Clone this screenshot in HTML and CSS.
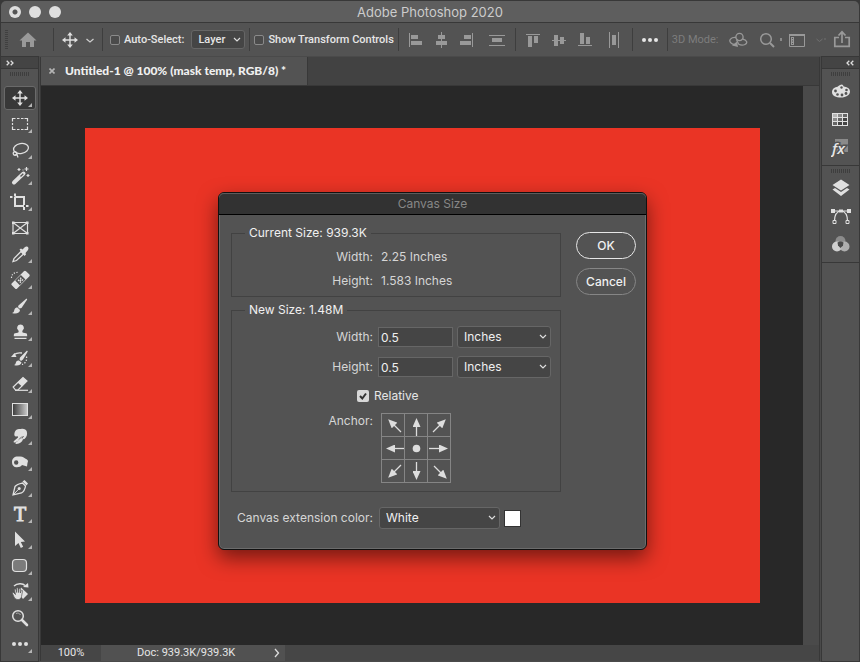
FILE: index.html
```html
<!DOCTYPE html>
<html lang="en">
<head>
    <meta charset="UTF-8">
    <meta name="viewport" content="width=device-width, initial-scale=1.0">
    <title>Adobe Photoshop 2020</title>
    <link rel="stylesheet" href="styles.css">
</head>
<body>

    <!-- Title bar -->
    <header class="title-bar">
        <div class="lights">
            <button class="light edited" aria-label="Close"></button>
            <button class="light" aria-label="Minimize"></button>
            <button class="light" aria-label="Zoom"></button>
        </div>
        <h1>Adobe Photoshop 2020</h1>
    </header>

    <!-- Options bar -->
    <div class="options-bar">
        <span class="bar-grip"></span>
        <button class="icon-button home" aria-label="Home">
            <svg width="20" height="20" viewBox="-10 -10 20 20"><path fill="#999" d="M-1-7.500L7.500.5H5V7H1V2H-3V7H-7V.5H-9.500z"/></svg>
        </button>
        <span class="sep"></span>
        <button class="icon-button current" aria-label="Move tool">
            <svg width="20" height="20" viewBox="-10 -10 20 20"><use href="#move"/></svg>
        </button>
        <button class="icon-button small" aria-label="Tool presets">
            <svg width="10" height="10" viewBox="0 0 10 10"><path d="M1.500 4L5 7 8.500 4" fill="none" stroke="#ccc" stroke-width="1.300"/></svg>
        </button>
        <span class="sep"></span>
        <div class="option-group">
            <input type="checkbox" id="autoSelect">
            <label for="autoSelect">Auto-Select:</label>
            <select class="layer-select" aria-label="Auto-select target">
                <option>Layer</option>
                <option>Group</option>
            </select>
        </div>
        <span class="sep"></span>
        <div class="option-group transform">
            <input type="checkbox" id="showTransform">
            <label for="showTransform">Show Transform Controls</label>
        </div>
        <span class="sep"></span>
        <button class="icon-button" aria-label="Align left edges">
            <svg width="20" height="20" viewBox="-10 -10 20 20" fill="#999"><path d="M-7-7h1V7h-1zM-5-5h7v4h-7zM-5 1H6v4H-5z"/></svg>
        </button>
        <button class="icon-button" aria-label="Align horizontal centers">
            <svg width="20" height="20" viewBox="-10 -10 20 20" fill="#999"><path d="M-1-8h1V8h-1zM-4-5h7v4h-7zM-6 1H5v4H-6z"/></svg>
        </button>
        <button class="icon-button" aria-label="Align right edges">
            <svg width="20" height="20" viewBox="-10 -10 20 20" fill="#999"><path d="M4-7h1V7H4zM-4-5h7v4h-7zM-8 1H3v4H-8z"/></svg>
        </button>
        <button class="icon-button wide" aria-label="Distribute vertically">
            <svg width="20" height="20" viewBox="-10 -10 20 20" fill="#999"><path d="M-7-5H9v1H-7zM-4-2H6v4H-4zM-7 5H9v1H-7z"/></svg>
        </button>
        <span class="sep"></span>
        <button class="icon-button" aria-label="Align top edges">
            <svg width="20" height="20" viewBox="-10 -10 20 20" fill="#999"><path d="M-7-6H7v1H-7zM-5-4h4V7h-4zM1-4h4v7H1z"/></svg>
        </button>
        <button class="icon-button" aria-label="Align vertical centers">
            <svg width="20" height="20" viewBox="-10 -10 20 20" fill="#999"><path d="M-7 0H7v1H-7zM-5-5h4V6h-4zM1-3h4v7H1z"/></svg>
        </button>
        <button class="icon-button" aria-label="Align bottom edges">
            <svg width="20" height="20" viewBox="-10 -10 20 20" fill="#999"><path d="M-7 5H7v1H-7zM-5-7h4V4h-4zM1-3h4v7H1z"/></svg>
        </button>
        <button class="icon-button wide" aria-label="Distribute horizontally">
            <svg width="20" height="20" viewBox="-10 -10 20 20" fill="#999"><path d="M-4-8h1V8h-1zM-1-5h4V5h-4zM5-8h1V8H5z"/></svg>
        </button>
        <span class="sep"></span>
        <button class="icon-button" aria-label="More align options">
            <svg width="20" height="20" viewBox="-10 -10 20 20" fill="#e6e6e6"><circle cx="-6" cy="0" r="2"/><circle cx="0" cy="0" r="2"/><circle cx="6" cy="0" r="2"/></svg>
        </button>
        <span class="sep"></span>
        <span class="mode-label">3D Mode:</span>
        <div class="bar-end">
            <button class="icon-button orbit" aria-label="Orbit 3D camera">
                <svg width="20" height="20" viewBox="-10 -10 20 20" fill="none" stroke="#999" stroke-width="1.300"><circle cx="1.500" cy="-3" r="3.600"/><path d="M-2-2.500C-7-3-10 .5-7 3c1 1 2 1.500 3.500 1.500M4.500-1C9 0 10 3 7 4.500 5 5.500 2 5 .5 4L-1.500-.5"/><path d="M-6 5.500L-1 1.500 0 7z" fill="#999" stroke="none"/></svg>
            </button>
            <button class="icon-button search" aria-label="Search">
                <svg width="20" height="20" viewBox="-10 -10 20 20" fill="none" stroke="#999"><circle cx="-1" cy="-1" r="5.300" stroke-width="1.500"/><path d="M3 3L7 7" stroke-width="2"/></svg>
            </button>
            <span class="bar-dot"></span>
            <button class="icon-button workspace-button" aria-label="Workspace">
                <svg width="20" height="20" viewBox="-10 -10 20 20"><path d="M-7.500-5.500h15v12h-15z" fill="none" stroke="#999"/><path d="M-8-6H8v2H-8zM-6-3h3v8h-3z" fill="#999"/><path d="M-5-2h1v1h-1zM-5 .5h1v1h-1zM-5 3h1v1h-1z" fill="#535353"/></svg>
            </button>
            <button class="icon-button small" aria-label="Workspace menu">
                <svg width="12" height="10" viewBox="0 0 12 10"><path d="M1.500 4L4.500 6.500 7.500 4M10 3v2" fill="none" stroke="#707070"/></svg>
            </button>
            <button class="icon-button" aria-label="Share">
                <svg width="20" height="20" viewBox="-10 -10 20 20" fill="none" stroke="#999" stroke-width="1.700"><path d="M-3-2.500H-7.200V6.300H7.200V-2.500H3M0 3V-7M-3.500-4.500L0-8.200 3.500-4.500"/></svg>
            </button>
        </div>
    </div>

    <div class="workspace">

        <!-- Tools -->
        <aside class="tools">
            <button class="collapse" aria-label="Expand tools">
                <svg width="8" height="6" viewBox="0 0 8 6"><path d="M.7.700L3 3 .7 5.300M4.700.700L7 3 4.700 5.300" fill="none" stroke="#ddd" stroke-width="1.300"/></svg>
            </button>
            <span class="grip"></span>
            <nav class="tool-list">
                <button class="tool active" aria-label="Move">
                    <svg width="20" height="20" viewBox="-10 -10 20 20"><g id="move"><path d="M0-6V6M-6 0H6" stroke="#e0e0e0" stroke-width="1.400"/><path fill="#e0e0e0" d="M0-8L2.800-4.500H-2.800zM0 8L2.800 4.500H-2.800zM-8 0L-4.500-2.800V2.800zM8 0L4.500-2.800V2.800z"/></g></svg>
                </button>
                <button class="tool" aria-label="Rectangular marquee">
                    <svg width="20" height="20" viewBox="-10 -10 20 20"><path d="M-7.500-2.500v-3h3M4.500-5.500h3v3M7.500 2.500v3h-3M-4.500 5.500h-3v-3M-3-5.500h2.500M1-5.500h2.500M-3 5.500h2.500M1 5.500h2.500M-7.500-1v2M7.500-1v2" fill="none" stroke="#e0e0e0" stroke-width="1.200"/></svg>
                </button>
                <button class="tool" aria-label="Lasso">
                    <svg width="20" height="20" viewBox="-10 -10 20 20" fill="none" stroke="#e0e0e0" stroke-width="1.300"><ellipse cx="1" cy="-1.500" rx="7.500" ry="5" transform="rotate(-10 1 -1.500)"/><circle cx="-5" cy="3.500" r="1.800"/><path d="M-5.500 5.200L-3 4.500-2 7.500"/></svg>
                </button>
                <button class="tool" aria-label="Magic wand">
                    <svg width="20" height="20" viewBox="-10 -10 20 20" fill="none" stroke="#e0e0e0"><path d="M-6 6.500L3.500-2.500" stroke-width="4" stroke-linecap="round"/><path d="M.5.500L3.300-2.300" stroke="#535353" stroke-width="1.300"/><path d="M-1-8v3M-2.500-6.500h3M6.500-9v4M4.500-7h4M8-2v3M6.500-.5h3M2.500-6h1" stroke-width="1.200"/></svg>
                </button>
                <button class="tool" aria-label="Crop">
                    <svg width="20" height="20" viewBox="-10 -10 20 20" fill="none" stroke="#e0e0e0" stroke-width="2"><path d="M-5-8.500v3M-10-5h2.500M-5-5H4V3M-5-5V4H4M4 5v3M6 4h2.500"/></svg>
                </button>
                <button class="tool plain" aria-label="Frame">
                    <svg width="20" height="20" viewBox="-10 -10 20 20" fill="none" stroke="#e0e0e0" stroke-width="1.200"><path d="M-7-5.500H7.500v11H-7zM-7-5.500L7.500 5.500M7.500-5.500L-7 5.500"/><path fill="#e0e0e0" stroke="none" d="M-8-6.500h2.500v2.500H-8zM6-6.500h2.500v2.500H6zM-8 4h2.500v2.500H-8zM6 4h2.500v2.500H6z"/></svg>
                </button>
                <button class="tool" aria-label="Eyedropper">
                    <svg width="20" height="20" viewBox="-10 -10 20 20"><path d="M-7 7.500l1-3L1-2.500 3.500 0-3.500 6.500z" fill="none" stroke="#e0e0e0" stroke-width="1.300"/><path d="M-.500-4.500L1-5.500 2.500-4.500 5-7c2-1.500 4.500.5 3 3L5.500-1 6 .5 4.500 2z" fill="#e0e0e0"/></svg>
                </button>
                <button class="tool" aria-label="Spot healing brush">
                    <svg width="20" height="20" viewBox="-10 -10 20 20"><g transform="rotate(-45)"><rect x="-9.500" y="-3.500" width="20" height="7.500" rx="1.500" fill="#e0e0e0"/><rect x="-3.800" y="-3" width="8" height="6.500" fill="#535353"/><path d="M-2-1.500h1.500V0H-2zM1-1.500h1.500V0H1zM-2 1h1.500v1.500H-2zM1 1h1.500v1.500H1zM-.5-.3H1V1.200H-.5z" fill="#e0e0e0"/></g><path d="M-8.500-2c0-4 3-6 7.500-5.500" fill="none" stroke="#e0e0e0" stroke-width="1.200" stroke-dasharray="1.200 1.500"/></svg>
                </button>
                <button class="tool" aria-label="Brush">
                    <svg width="20" height="20" viewBox="-10 -10 20 20" fill="#e0e0e0"><path d="M6.500-7.500L7.200-6.500 1.500 2-.5 2.500-2 1-1.500-.5z"/><path d="M-2.500 1.500L0 4C0 7-4 8.500-8 7c2-.500 2-2 2.500-3.500s1.500-2 3-2z"/></svg>
                </button>
                <button class="tool" aria-label="Clone stamp">
                    <svg width="20" height="20" viewBox="-10 -10 20 20" fill="#e0e0e0"><path d="M.5-7.500a3.500 3.300 0 0 1 2.200 5.800C2 0 2.200.5 3.500.8L6 1.200C7 1.500 7.200 2 7.200 4.200H-6.200C-6.200 2-6 1.500-5 1.200L-2.500.8C-1.200.5-1 0-1.700-1.700A3.500 3.300 0 0 1 .5-7.500zM-5.500 5.800h12V7h-12z"/></svg>
                </button>
                <button class="tool" aria-label="History brush">
                    <svg width="20" height="20" viewBox="-10 -10 20 20" fill="#e0e0e0"><path d="M7-7.500l.8 1L3 1.500 1 3-.5 1.500 0-.5zM-1 2.500L1.500 4.500C1 7-2.500 8.500-6 7c2-.5 1.500-2 2.200-3.200S-2 2.500-1 2.500zM-9-1L-5.500-5-3.500-1z"/><path d="M-6-3.500C-3-5.500-1-5.500 2-5" fill="none" stroke="#e0e0e0" stroke-width="1.300"/><path d="M6.500-1.500c.5 4-.5 6.500-4.500 8" fill="none" stroke="#e0e0e0" stroke-width="1.300" stroke-dasharray="1.300 1.700"/></svg>
                </button>
                <button class="tool" aria-label="Eraser">
                    <svg width="20" height="20" viewBox="-10 -10 20 20"><path d="M-6.800 3L3-6.500 7-3-2 6H-4.500z" fill="none" stroke="#e0e0e0" stroke-width="1.200"/><path d="M-2.500-1.500L3-6.500 7-3 2 2.500z" fill="#e0e0e0"/><path d="M-5 6.300H8" stroke="#e0e0e0" stroke-width="1.200"/></svg>
                </button>
                <button class="tool" aria-label="Gradient">
                    <svg width="20" height="20" viewBox="-10 -10 20 20"><defs><linearGradient id="ramp"><stop offset="0" stop-color="#3a3a3a"/><stop offset="1" stop-color="#ccc"/></linearGradient></defs><rect x="-7.500" y="-6.500" width="15" height="12" fill="url(#ramp)" stroke="#e0e0e0"/></svg>
                </button>
                <button class="tool" aria-label="Smudge">
                    <svg width="20" height="20" viewBox="-10 -10 20 20"><path fill="#e0e0e0" d="M-5.500-3C-4.500-7-2-7 1-7 4-7.500 6-6.500 6.800-4.500 7.500-2 7 1 4.500 3L3 3.300C2 6 0 8-3.500 8c-1.500 0-1.500-1.500 0-2L-.5 4-5 6.500c-1.500.5-2-1-.5-2L-2 1.500-2.200.2-4 .5C-5.500.5-6-1-5.500-3z"/><path d="M-1 3.500L2 .5M2 2.500L3.500 0" stroke="#666"/></svg>
                </button>
                <button class="tool" aria-label="Burn">
                    <svg width="20" height="20" viewBox="-10 -10 20 20"><path fill="#e0e0e0" fill-rule="evenodd" d="M-8 0C-8-4-5-6-1-5.500 3-6 4-4 7-2.500 8.500-1 8-1 7.500 1L7 4.500 2 3C0 6-8 7-8 0zM-6 .5a2.200 2.200 0 1 0 4.400 0 2.200 2.200 0 1 0-4.400 0z"/></svg>
                </button>
                <button class="tool" aria-label="Pen">
                    <svg width="20" height="20" viewBox="-10 -10 20 20"><path d="M-7 7L-5-1.500C-3-4 0-4.500 2.500-5L5.500-2C5 1.500 4 3.500 1.500 5z" fill="none" stroke="#e0e0e0" stroke-width="1.300"/><path d="M-7 7L-1 .8" stroke="#e0e0e0"/><circle cx="-.8" cy=".5" r="1.500" fill="#e0e0e0"/><path d="M2.500-6.500L4.500-8 8-4.500 6.500-2.500z" fill="#e0e0e0"/></svg>
                </button>
                <button class="tool type" aria-label="Type">T</button>
                <button class="tool" aria-label="Path selection">
                    <svg width="20" height="20" viewBox="-10 -10 20 20"><path fill="#e0e0e0" d="M-5-8.500L5 1.500.8 2 3.200 6.800.8 8-1.500 3-5 6z"/></svg>
                </button>
                <button class="tool" aria-label="Rounded rectangle">
                    <svg width="20" height="20" viewBox="-10 -10 20 20"><rect x="-7.500" y="-6.500" width="14" height="12" rx="3.500" fill="#7b7b7b" stroke="#e0e0e0" stroke-width="1.200"/></svg>
                </button>
                <button class="tool" aria-label="Rotate view">
                    <svg width="20" height="20" viewBox="-10 -10 20 20"><path d="M1-4.500L8 2 3 7-1 2z" fill="#e0e0e0"/><path d="M-7.500 1.500c-.5-1 .8-1.500 1.500-.5L-4.500 2.500-5.500-2c-.2-1 1.200-1.300 1.500-.3L-3.300.5-3.500-3.500c0-1 1.400-1 1.500 0L-1.500.5-1-3c.1-1 1.400-.8 1.400.2L.3 1 1.200-1.300c.4-.9 1.500-.5 1.300.5L1.500 4.500C1 8-4 9-6 5z" fill="#e0e0e0" stroke="#535353" stroke-width=".7"/><path d="M-6-6C-3-9 3-9 5-6.500" fill="none" stroke="#e0e0e0" stroke-width="1.400"/><path d="M3-5l5.500.5L8-9z" fill="#e0e0e0"/></svg>
                </button>
                <button class="tool plain" aria-label="Zoom tool">
                    <svg width="20" height="20" viewBox="-10 -10 20 20" fill="none" stroke="#e0e0e0"><circle cx="-2" cy="-2" r="5.300" stroke-width="1.500"/><path d="M2 2L7 7" stroke-width="2.600" stroke-linecap="round"/><path d="M-4-4.500C-2.500-5.500 0-4.500 .5-3" stroke="#aaa"/></svg>
                </button>
                <button class="tool" aria-label="Edit toolbar">
                    <svg width="20" height="20" viewBox="-10 -10 20 20" fill="#e0e0e0"><circle cx="-6" cy="0" r="2"/><circle cx="0" cy="0" r="2"/><circle cx="6" cy="0" r="2"/></svg>
                </button>
            </nav>
        </aside>

        <!-- Document -->
        <main class="document">
            <div class="tabs">
                <div class="tab">
                    <button class="tab-close" aria-label="Close tab">
                        <svg width="6" height="6" viewBox="0 0 6 6"><path d="M.5.500L5.500 5.500M5.500.500L.5 5.500" stroke="#b4b4b4" stroke-width="1.600"/></svg>
                    </button>
                    <span>Untitled-1 @ 100% (mask temp, RGB/8) *</span>
                </div>
            </div>
            <div class="view">
                <div class="canvas"><div class="artboard"></div></div>
                <div class="scrollbar"></div>
            </div>
            <footer class="status-bar">
                <input class="zoom-level" type="text" value="100%" aria-label="Zoom level">
                <div class="doc-info">
                    <span>Doc: 939.3K/939.3K</span>
                    <button aria-label="Status menu">
                        <svg width="6" height="10" viewBox="0 0 6 10"><path d="M1 1L4.500 5 1 9" fill="none" stroke="#ddd" stroke-width="1.300"/></svg>
                    </button>
                </div>
            </footer>
        </main>

        <!-- Collapsed panels -->
        <aside class="panels">
            <button class="collapse" aria-label="Expand panels">
                <svg width="8" height="6" viewBox="0 0 8 6"><path d="M3.300.700L1 3 3.300 5.300M7.300.700L5 3 7.300 5.300" fill="none" stroke="#ddd" stroke-width="1.300"/></svg>
            </button>
            <div class="panel-group">
                <span class="grip"></span>
                <button class="panel-button" aria-label="Color">
                    <svg width="20" height="20" viewBox="-10 -10 20 20"><path fill="#e0e0e0" d="M-9 1C-9-2-6-4-3.500-4.200-2.500-5.500-.5-6.500 1-6.500 2.500-6 2-4.700 3-4.500 7-4 9-2 9 .5 9 4 5 6.500 0 6.500S-9 5-9 1z"/><g fill="#535353"><circle cx="-5.500" cy="0" r="1.400"/><circle cx="-3.500" cy="3.500" r="1.300"/><circle cx="1" cy="4" r="1.400"/><circle cx="5" cy="2.500" r="1.400"/><circle cx="5.500" cy="-1" r="1.300"/><circle cx=".5" cy="-3.500" r="1.200"/></g></svg>
                </button>
                <button class="panel-button" aria-label="Swatches">
                    <svg width="20" height="20" viewBox="-10 -10 20 20"><path fill="#e0e0e0" d="M-9-6H7V7H-9z"/><path fill="#b5b5b5" d="M-8-5h4v3h-4z"/><path fill="#8a8a8a" d="M-3-5h4v3h-4zM-8-1h4v3h-4z"/><path fill="#666" d="M2-5h4v3H2zM-3-1h4v3h-4zM-8 3h4v3h-4z"/><path fill="#444" d="M2-1h4v3H2zM-3 3h4v3h-4zM2 3h4v3H2z"/></svg>
                </button>
                <button class="panel-button" aria-label="Styles">
                    <svg width="20" height="20" viewBox="-10 -10 20 20"><path fill="#8a8a8a" d="M-6-8H7V5H-6z"/><text class="fx fx-back" x="-9" y="7">fx</text><text class="fx" x="-9" y="7">fx</text></svg>
                </button>
            </div>
            <div class="panel-group">
                <span class="grip"></span>
                <button class="panel-button" aria-label="Layers">
                    <svg width="20" height="20" viewBox="-10 -10 20 20" fill="#e0e0e0"><path d="M0-8.500L8.500-3 0 2.500-8.500-3zM-8.500 1.500L-6 0 0 4 6 0 8.500 1.500 0 8z"/></svg>
                </button>
                <button class="panel-button" aria-label="Paths">
                    <svg width="20" height="20" viewBox="-10 -10 20 20"><path d="M-9-5H9M-6.500 5C-6.500-1-4-4.500 0-5 4-4.500 6.500-1 6.500 5" fill="none" stroke="#e0e0e0" stroke-width="1.200"/><path fill="#e0e0e0" d="M-10-7h4v4h-4zM-2-6.500h4v3h-4zM6-7h4v4H6z"/><path d="M-8 4.500h3v3h-3zM5 4.500h3v3H5z" fill="#535353" stroke="#e0e0e0"/></svg>
                </button>
                <button class="panel-button" aria-label="Channels">
                    <svg width="20" height="20" viewBox="-10 -10 20 20"><circle cx="-.5" cy="-3" r="5" fill="#8c8c8c"/><circle cx="-4" cy="2.500" r="5" fill="#ddd" fill-opacity=".9"/><circle cx="3.500" cy="2.500" r="5" fill="#b8b8b8" fill-opacity=".9"/><path d="M-3.500-1.500Q-.5-3.500 2.500-1.500L2 1.500-.5 4-3 1.500z" fill="#4a4a4a"/></svg>
                </button>
            </div>
        </aside>
    </div>

    <!-- Canvas Size dialog -->
    <form class="dialog" role="dialog" aria-labelledby="dialogTitle">
        <h2 id="dialogTitle">Canvas Size</h2>
        <div class="dialog-body">
            <div class="dialog-form">
                <fieldset class="current-size">
                    <legend>Current Size: 939.3K</legend>
                    <div class="row text-row">
                        <span class="name">Width:</span>
                        <span class="value">2.25 Inches</span>
                    </div>
                    <div class="row text-row">
                        <span class="name">Height:</span>
                        <span class="value">1.583 Inches</span>
                    </div>
                </fieldset>

                <fieldset class="new-size">
                    <legend>New Size: 1.48M</legend>
                    <div class="row">
                        <label class="name" for="newWidth">Width:</label>
                        <input class="number" type="text" id="newWidth" value="0.5">
                        <select class="unit" aria-label="Width unit"><option>Inches</option><option>Pixels</option></select>
                    </div>
                    <div class="row">
                        <label class="name" for="newHeight">Height:</label>
                        <input class="number" type="text" id="newHeight" value="0.5">
                        <select class="unit" aria-label="Height unit"><option>Inches</option><option>Pixels</option></select>
                    </div>
                    <div class="row relative-row">
                        <input type="checkbox" id="relative" checked>
                        <label for="relative">Relative</label>
                    </div>
                    <div class="row anchor-row">
                        <span class="name">Anchor:</span>
                        <div class="anchor">
                            <button type="button" aria-label="Top left"><svg width="22" height="22" viewBox="0 0 22 22"><defs><marker id="head" viewBox="0 0 9 8" refX="5" refY="4" markerWidth="9" markerHeight="8" markerUnits="userSpaceOnUse" orient="auto"><path d="M0 0L9 4 0 8z" fill="#ddd"/></marker></defs><path class="arrow" d="M19 18L9 8"/></svg></button>
                            <button type="button" aria-label="Top"><svg width="22" height="22" viewBox="0 0 22 22"><path class="arrow" d="M11.500 22V8"/></svg></button>
                            <button type="button" aria-label="Top right"><svg width="22" height="22" viewBox="0 0 22 22"><path class="arrow" d="M5 18L15 8"/></svg></button>
                            <button type="button" aria-label="Left"><svg width="22" height="22" viewBox="0 0 22 22"><path class="arrow" d="M22 11.500H8"/></svg></button>
                            <button type="button" aria-label="Center"><svg width="22" height="22" viewBox="0 0 22 22"><circle cx="11.500" cy="11.500" r="3.800" fill="#ddd"/></svg></button>
                            <button type="button" aria-label="Right"><svg width="22" height="22" viewBox="0 0 22 22"><path class="arrow" d="M1 11.500H16"/></svg></button>
                            <button type="button" aria-label="Bottom left"><svg width="22" height="22" viewBox="0 0 22 22"><path class="arrow" d="M19 5L9 15"/></svg></button>
                            <button type="button" aria-label="Bottom"><svg width="22" height="22" viewBox="0 0 22 22"><path class="arrow" d="M11.500 2V16"/></svg></button>
                            <button type="button" aria-label="Bottom right"><svg width="22" height="22" viewBox="0 0 22 22"><path class="arrow" d="M6 6L16 16"/></svg></button>
                        </div>
                    </div>
                </fieldset>

                <div class="row extension-row">
                    <label class="name" for="extensionColor">Canvas extension color:</label>
                    <select class="extension" id="extensionColor"><option>White</option><option>Black</option></select>
                    <button type="button" class="swatch" aria-label="Pick extension color"></button>
                </div>
            </div>

            <div class="dialog-buttons">
                <button type="submit" class="pill primary">OK</button>
                <button type="button" class="pill">Cancel</button>
            </div>
        </div>
    </form>

</body>
</html>
```
FILE: styles.css
```css
/* Base */
* {
    box-sizing: border-box;
}

body {
    margin: 0;
    display: flex;
    flex-direction: column;
    height: 100vh;
    padding: 1px;
    overflow: hidden;
    background: #383838;
    color: #e6e6e6;
    font: 11px/16px Roboto, "Liberation Sans", sans-serif;
}

button,
input,
select {
    margin: 0;
    padding: 0;
    border: none;
    background: none;
    color: inherit;
    font: inherit;
}

svg {
    display: block;
    flex: none;
}

/* All drop-downs share one chevron */
select {
    appearance: none;
    height: 22px;
    padding: 0 6px;
    border: 1px solid #666;
    border-radius: 3px;
    background: #454545 url("data:image/svg+xml,%3Csvg xmlns='http://www.w3.org/2000/svg' width='8' height='6'%3E%3Cpath d='M1 1l3 3 3-3' fill='none' stroke='%23ddd' stroke-width='1.200'/%3E%3C/svg%3E") no-repeat right 3px center;
}

input[type="checkbox"] {
    appearance: none;
    flex: none;
    width: 10px;
    height: 10px;
    border: 1px solid #8a8a8a;
    border-radius: 2px;
    background: #4b4b4b;
}

/* Title bar */
.title-bar {
    display: grid;
    grid-template-columns: 1fr auto 1fr;
    align-items: center;
    height: 22px;
    flex: none;
    padding: 0 8px;
    border-bottom: 1px solid #383838;
    border-radius: 5px 5px 0 0;
    background: #5e5e5e;
}

.title-bar h1 {
    margin: 0;
    color: #ccc;
    font-family: Inter, sans-serif;
    font-size: 13px;
    font-weight: 400;
    line-height: 20px;
}

.lights {
    display: flex;
    gap: 8px;
}

.light {
    width: 12px;
    height: 12px;
    border-radius: 50%;
    background: #dedede;
}

.light.edited {
    background: radial-gradient(circle, #555 2px, #dedede 3px);
}

/* Options bar */
.options-bar {
    display: flex;
    align-items: center;
    height: 34px;
    flex: none;
    border-bottom: 1px solid #383838;
    background: #535353;
    font-weight: 500;
    white-space: nowrap;
}

.bar-grip {
    width: 3px;
    height: 20px;
    margin: 0 4px;
    background: repeating-linear-gradient(#404040 0 1px, transparent 1px 2px);
}

.sep {
    flex: none;
    width: 1px;
    height: 23px;
    margin: 0 4px;
    background: #3e3e3e;
}

.icon-button {
    display: flex;
    align-items: center;
    justify-content: center;
    flex: none;
    width: 26px;
    height: 26px;
}

.icon-button.home {
    width: 33px;
    margin-right: 4px;
}

.icon-button.current {
    width: 24px;
}

.icon-button.small {
    width: 16px;
}

.icon-button.wide {
    width: 30px;
}

.option-group {
    display: flex;
    align-items: center;
    flex: none;
    gap: 4px;
    padding-left: 3px;
}

.option-group.transform {
    padding: 0;
}

.layer-select {
    width: 54px;
    height: 19px;
    margin-left: 3px;
}

.mode-label {
    color: #7d7d7d;
    font-weight: 400;
}

.bar-end {
    display: flex;
    align-items: center;
    margin-left: auto;
    padding-right: 4px;
}

.icon-button.search {
    margin-left: 3px;
}

.bar-dot {
    width: 2px;
    height: 3px;
    background: #888;
}

.icon-button.workspace-button {
    margin: 0 3px 0 2px;
}

/* Workspace */
.workspace {
    display: flex;
    flex: 1;
    min-height: 0;
}

.tools,
.panels {
    display: flex;
    flex-direction: column;
    flex: none;
    width: 38px;
    background: #535353;
}

.tools {
    border-right: 1px solid #383838;
}

.panels {
    border-left: 1px solid #383838;
}

.collapse {
    display: flex;
    align-items: center;
    height: 12px;
    flex: none;
    padding: 0 5px;
    border-bottom: 1px solid #383838;
    background: #444;
}

.panels .collapse {
    justify-content: flex-end;
}

.grip {
    display: block;
    flex: none;
    width: 20px;
    height: 4px;
    margin: 3px auto 1px;
    background: repeating-linear-gradient(90deg, #3e3e3e 0 1px, transparent 1px 2px);
}

/* Tools */
.tool-list {
    display: flex;
    flex-direction: column;
    padding: 8px 2px 0 3px;
}

.tool {
    position: relative;
    display: flex;
    align-items: center;
    justify-content: center;
    height: 24px;
    margin: 1px 0;
    border-radius: 3px;
}

.tool.active {
    background: #383838;
    box-shadow: inset 0 0 0 1px #6a6a6a;
}

.tool::after {
    content: "";
    position: absolute;
    right: 4px;
    bottom: 3px;
    border: 2px solid #b5b5b5;
    border-top-color: transparent;
    border-left-color: transparent;
}

.tool.plain::after {
    display: none;
}

.tool.type {
    color: #e0e0e0;
    font: 500 20px/24px "Liberation Serif", serif;
    -webkit-text-stroke: 1px #e0e0e0;
}

/* Document */
.document {
    display: flex;
    flex-direction: column;
    flex: 1;
    min-width: 0;
    border: solid #383838;
    border-width: 0 1px;
    margin: 0 1px;
    box-shadow: 0 0 0 1px #4a4a4a;
}

.tabs {
    display: flex;
    height: 29px;
    flex: none;
    border-bottom: 1px solid #383838;
    background: #424242;
}

.tab {
    display: flex;
    align-items: center;
    gap: 10px;
    min-width: 267px;
    padding: 0 8px;
    border-right: 1px solid #383838;
    background: #535353;
    color: #f0f0f0;
    font-family: Lato, "Open Sans", sans-serif;
    font-size: 12px;
    font-weight: 900;
}

.view {
    display: flex;
    flex: 1;
    min-height: 0;
}

.canvas {
    display: flex;
    flex: 1;
    padding: 42px 43px 42px 44px;
    background: #282828;
}

.artboard {
    flex: 1;
    background: #ea3425;
}

.scrollbar {
    width: 16px;
    background: #4a4a4a;
}

.status-bar {
    display: flex;
    height: 16px;
    flex: none;
    background: #464646;
}

.zoom-level {
    width: 60px;
    text-align: center;
}

.doc-info {
    display: flex;
    align-items: center;
    justify-content: space-between;
    width: 184px;
    padding: 0 5px 0 36px;
    background: #515151;
}

/* Collapsed panels */
.panel-group {
    display: flex;
    flex-direction: column;
    flex: none;
    padding-bottom: 4px;
    border-bottom: 1px solid #383838;
}

.panel-button {
    display: flex;
    align-items: center;
    justify-content: center;
    height: 28px;
}

.fx {
    fill: #e6e6e6;
    font: italic 600 15px "Open Sans", sans-serif;
}

.fx-back {
    stroke: #535353;
    stroke-width: 3px;
}

/* Canvas Size dialog */
.dialog {
    position: absolute;
    top: 192px;
    left: 218px;
    width: 429px;
    border: 1px solid #111;
    border-radius: 6px;
    background: #535353;
    box-shadow: inset 0 0 0 1px #6c6c6c, 0 8px 20px rgba(0, 0, 0, 0.5);
    color: #d6d6d6;
    font-family: Inter, sans-serif;
    font-size: 12px;
}

.dialog h2 {
    margin: 0;
    height: 22px;
    border-bottom: 1px solid #000;
    border-radius: 5px 5px 0 0;
    background: #323232;
    box-shadow: inset 0 1px 0 #5c5c5c;
    color: #878787;
    font-size: 12px;
    font-weight: 400;
    line-height: 22px;
    text-align: center;
}

.dialog-body {
    display: flex;
    gap: 15px;
    padding: 10px 10px 20px 12px;
}

.dialog-form {
    flex: 1;
}

.dialog fieldset {
    margin: 0;
    padding: 0 0 0 13px;
    border: 1px solid #424242;
}

.dialog legend {
    padding: 0 4px;
    color: #f0f0f0;
}

.current-size {
    min-height: 72px;
}

.dialog .new-size {
    margin-top: 5px;
    padding-bottom: 8px;
}

.row {
    display: flex;
    align-items: center;
    height: 30px;
}

.name {
    width: 128px;
    margin-right: 5px;
    text-align: right;
}

.text-row {
    height: 24px;
}

.value {
    padding-left: 3px;
}

.dialog legend + .row {
    margin-top: 4px;
}

.number {
    width: 75px;
    height: 20px;
    margin-right: 4px;
    padding: 0 2px;
    border: 1px solid #666;
    background: #454545;
    color: #f0f0f0;
}

.unit {
    width: 94px;
    color: #f0f0f0;
}

.relative-row {
    gap: 5px;
    height: 28px;
    padding-left: 112px;
    color: #e6e6e6;
}

.relative-row input {
    width: 12px;
    height: 12px;
    border: none;
    background: #d8d8d8 url("data:image/svg+xml,%3Csvg xmlns='http://www.w3.org/2000/svg' width='12' height='12'%3E%3Cpath d='M3 6l2.300 2.500L9 3.500' fill='none' stroke='%23333' stroke-width='2'/%3E%3C/svg%3E");
}

.anchor-row {
    align-items: flex-start;
    height: auto;
    margin-top: 3px;
}

.anchor {
    display: grid;
    grid-template-columns: repeat(3, 22px);
    gap: 1px;
    margin-left: 3px;
    padding: 1px;
    background: #858585;
}

.anchor button {
    background: #535353;
}

.arrow {
    fill: none;
    stroke: #ddd;
    stroke-width: 1.3;
    marker-end: url(#head);
}

.extension-row {
    height: 22px;
    margin-top: 15px;
}

.extension-row .name {
    width: 142px;
    margin-right: 6px;
}

.extension {
    width: 121px;
    color: #f0f0f0;
}

.swatch {
    width: 17px;
    height: 17px;
    margin-left: 4px;
    border: 1px solid #333;
    background: #fff;
}

.dialog-buttons {
    display: flex;
    flex-direction: column;
    gap: 9px;
    width: 60px;
    padding-top: 7px;
}

.pill {
    height: 27px;
    border: 1px solid #868686;
    border-radius: 14px;
    color: #f0f0f0;
    font-weight: 500;
}

.pill.primary {
    border-color: #e6e6e6;
}
```
